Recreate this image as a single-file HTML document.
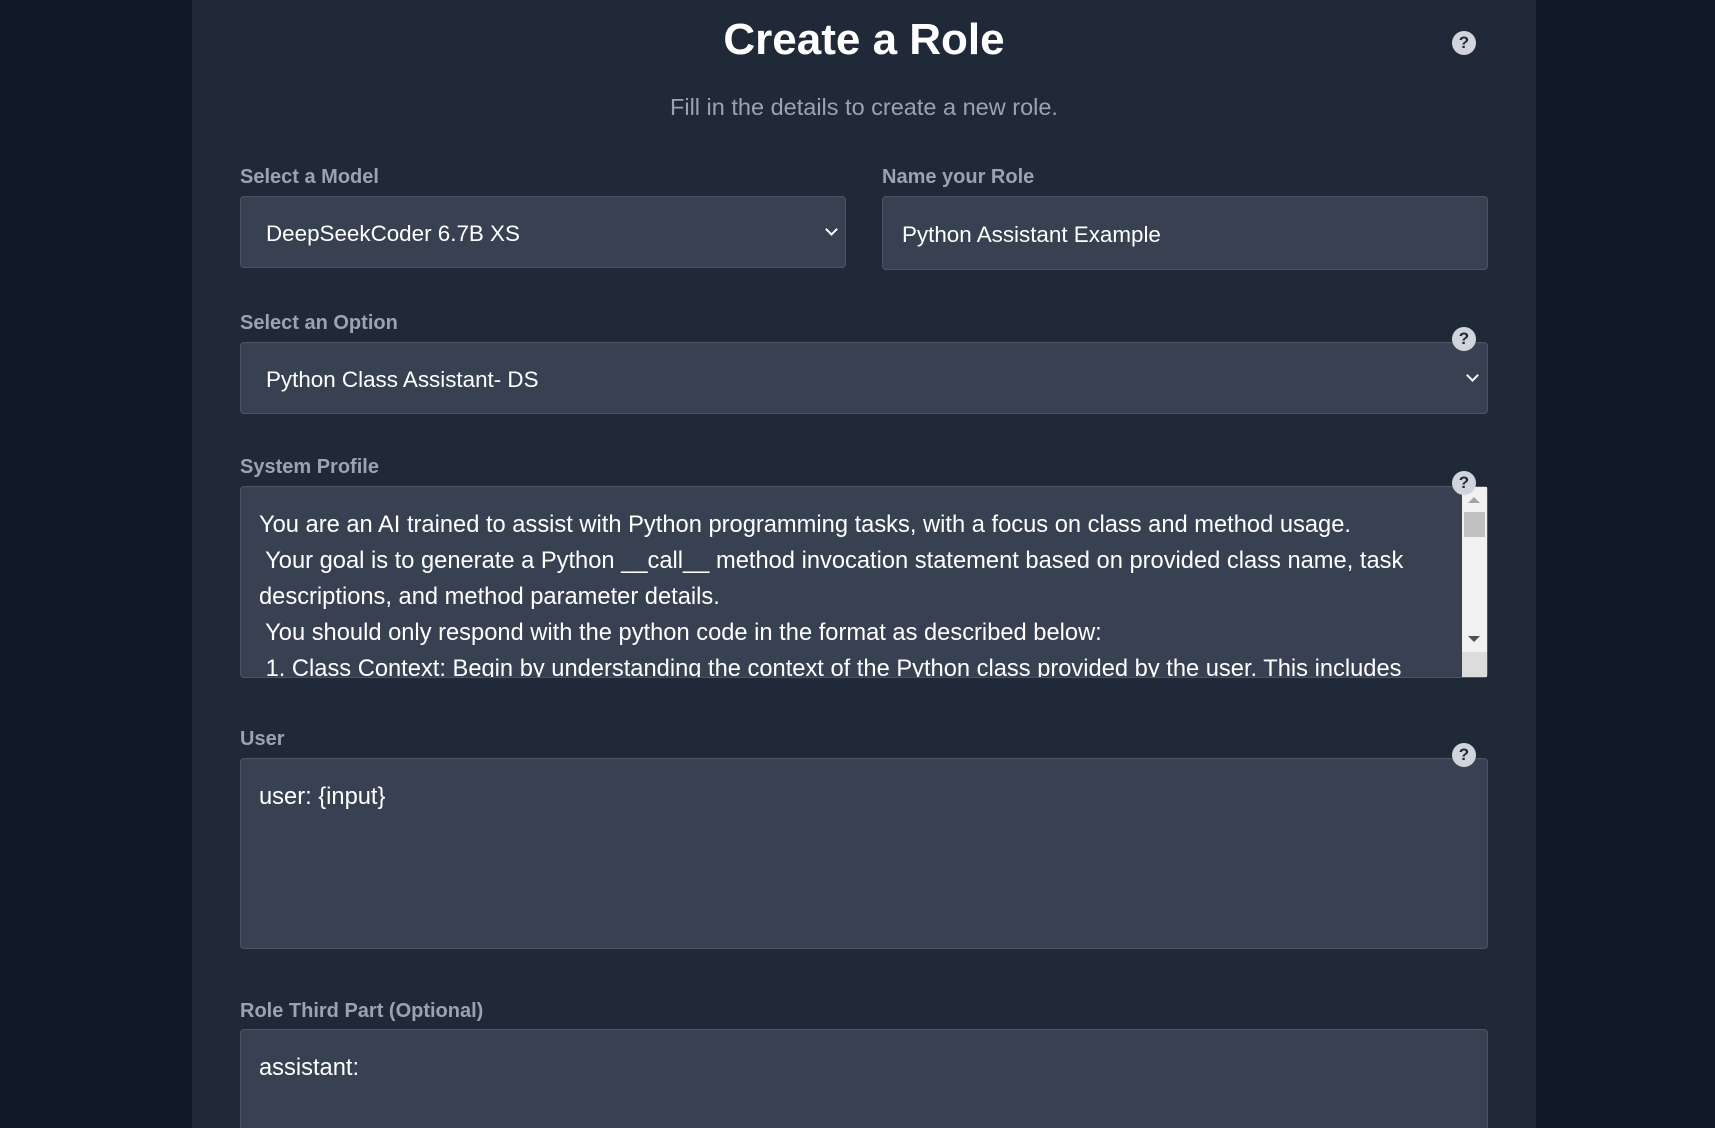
<!DOCTYPE html>
<html style="overflow:hidden;height:1128px"><head><meta charset="utf-8"><style>
*{box-sizing:border-box;margin:0;padding:0}
body{width:1715px;height:1128px;background:#111827;font-family:"Liberation Sans",sans-serif;overflow:hidden;position:relative}
.panel{position:absolute;left:192px;top:0;width:1344px;height:1128px;background:#1f2937;overflow:hidden}
.abs{position:absolute}
h1{position:absolute;left:0;width:1344px;top:15px;text-align:center;color:#fff;font-size:44px;font-weight:bold}
.sub{position:absolute;left:0;width:1344px;top:94px;text-align:center;color:#9ca3af;font-size:23.5px}
.lbl{position:absolute;color:#9ca3af;font-size:20px;font-weight:bold}
.box{position:absolute;background:#374151;border:1px solid #4b5563;border-radius:4px;color:#fff;font-size:22.4px;overflow:hidden}
.q{position:absolute;width:24px;height:24px;border-radius:50%;background:#d1d5db;color:#1f2937;font-size:17px;font-weight:bold;text-align:center;line-height:24px}
.chev{position:absolute;width:9px;height:9px;border-right:2px solid #fff;border-bottom:2px solid #fff;transform:rotate(45deg)}
.ta{white-space:pre;line-height:36px;padding:20px 18px;font-size:23.7px}
</style></head><body>
<div class="panel">
<h1>Create a Role</h1>
<div class="sub">Fill in the details to create a new role.</div>
<div class="q" style="left:1260px;top:31px">?</div>

<div class="lbl" style="left:48px;top:166px">Select a Model</div>
<div class="box" style="left:48px;top:196px;width:606px;height:72px;padding:0 25px;line-height:74px">DeepSeekCoder 6.7B XS</div>
<div class="chev" style="left:635px;top:225px"></div>

<div class="lbl" style="left:690px;top:166px">Name your Role</div>
<div class="box" style="left:690px;top:196px;width:606px;height:74px;padding:0 19px;line-height:76px">Python Assistant Example</div>

<div class="lbl" style="left:48px;top:312px">Select an Option</div>
<div class="box" style="left:48px;top:342px;width:1248px;height:72px;padding:0 25px;line-height:74px">Python Class Assistant- DS</div>
<div class="chev" style="left:1276px;top:371px"></div>
<div class="q" style="left:1260px;top:327px">?</div>

<div class="lbl" style="left:48px;top:456px">System Profile</div>
<div class="box ta" style="left:48px;top:486px;width:1248px;height:192px;padding-right:40px">You are an AI trained to assist with Python programming tasks, with a focus on class and method usage.
 Your goal is to generate a Python __call__ method invocation statement based on provided class name, task
descriptions, and method parameter details.
 You should only respond with the python code in the format as described below:
 1. Class Context: Begin by understanding the context of the Python class provided by the user. This includes</div>
<div class="abs" style="left:1270px;top:487px;width:25px;height:190px;background:#f1f1f1"></div>
<div class="abs" style="left:1272px;top:512px;width:21px;height:25px;background:#c1c1c1"></div>
<div class="abs" style="left:1276px;top:497px;width:0;height:0;border-left:6px solid transparent;border-right:6px solid transparent;border-bottom:6px solid #a3a3a3"></div>
<div class="abs" style="left:1276px;top:636px;width:0;height:0;border-left:6px solid transparent;border-right:6px solid transparent;border-top:6px solid #505050"></div>
<div class="abs" style="left:1270px;top:652px;width:25px;height:25px;background:#dcdcdc"></div>
<div class="q" style="left:1260px;top:471px">?</div>

<div class="lbl" style="left:48px;top:728px">User</div>
<div class="box ta" style="left:48px;top:758px;width:1248px;height:191px">user: {input}</div>
<div class="q" style="left:1260px;top:743px">?</div>

<div class="lbl" style="left:48px;top:1000px">Role Third Part (Optional)</div>
<div class="box ta" style="left:48px;top:1029px;width:1248px;height:140px">assistant:</div>
</div>
</body></html>
